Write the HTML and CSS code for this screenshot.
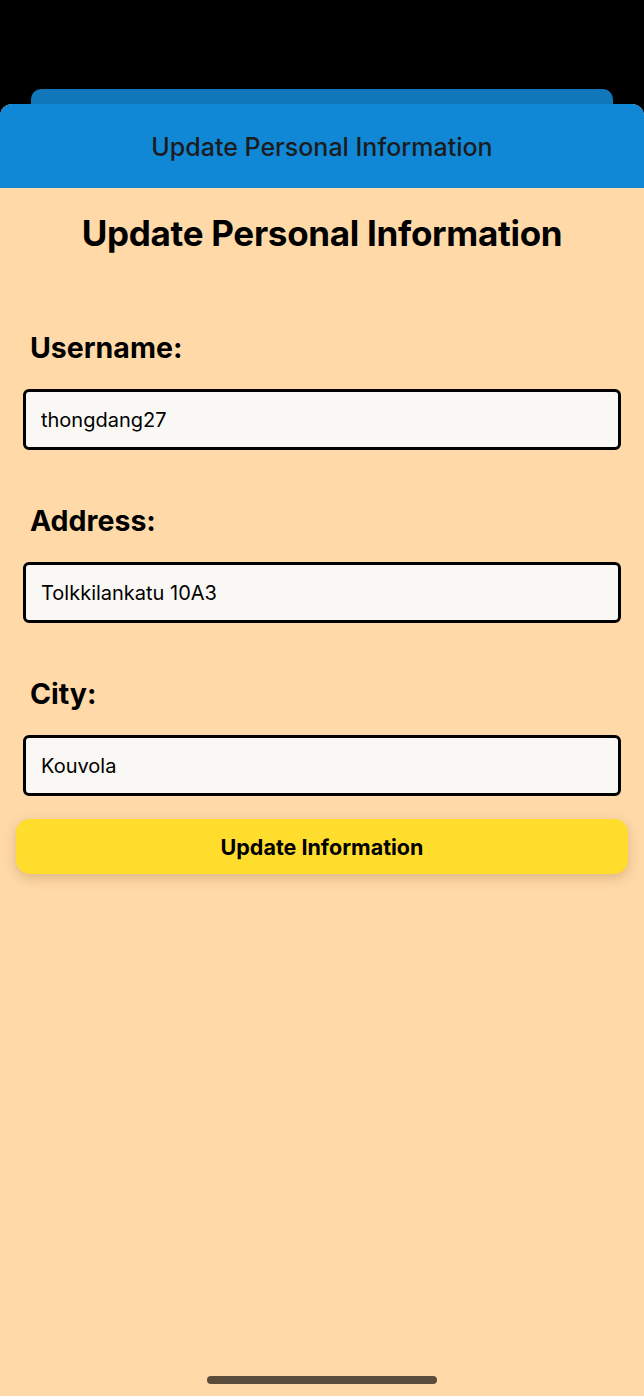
FILE: index.html
```html
<!DOCTYPE html>
<html lang="en">
<head>
<meta charset="utf-8">
<title>Update Personal Information</title>
<link rel="stylesheet" href="styles.css">
</head>
<body>
<div class="screen">
  <div class="status"></div>
  <div class="back-card"></div>
  <div class="sheet">
    <header class="nav"><span class="nav-title">Update Personal Information</span></header>
    <main class="content">
      <h1 class="title">Update Personal Information</h1>
      <form class="form">
        <label class="label" for="username">Username:</label>
        <input class="field" id="username" type="text" value="thongdang27">
        <label class="label" for="address">Address:</label>
        <input class="field" id="address" type="text" value="Tolkkilankatu 10A3">
        <label class="label" for="city">City:</label>
        <input class="field" id="city" type="text" value="Kouvola">
        <button class="btn" type="button">Update Information</button>
      </form>
      <div class="home-indicator"></div>
    </main>
  </div>
</div>
</body>
</html>
```
FILE: styles.css
```css
* { box-sizing: border-box; }
html, body { margin: 0; padding: 0; }
body {
  background: #000;
  font-family: Inter, "Noto Sans", "Liberation Sans", sans-serif;
  color: #000;
}
.screen {
  width: 644px;
  height: 1396px;
  display: flex;
  flex-direction: column;
  overflow: hidden;
}
.status { height: 89px; flex: none; }
.back-card {
  height: 15px;
  flex: none;
  margin: 0 31px;
  background: #1077bb;
  border-radius: 10px 10px 0 0;
}
.sheet {
  flex: 1;
  display: flex;
  flex-direction: column;
  border-radius: 12px 12px 0 0;
  overflow: hidden;
  background: #ffd9a8;
}
.nav {
  height: 84px;
  flex: none;
  background: #1088d5;
  display: flex;
  align-items: center;
  justify-content: center;
  padding-top: 1px;
}
.nav-title {
  font-size: 25px;
  font-weight: 500;
  color: #1c1c1e;
}
.content {
  flex: 1;
  display: flex;
  flex-direction: column;
}
.title {
  margin: 24px 0 0;
  text-align: center;
  font-size: 35px;
  line-height: 42px;
  font-weight: 700;
  letter-spacing: -0.3px;
}
.form {
  display: flex;
  flex-direction: column;
  margin-top: 77px;
}
.label {
  display: block;
  margin: 0 0 24px 30px;
  font-size: 28.5px;
  line-height: 34px;
  font-weight: 700;
}
.field {
  display: block;
  margin: 0 23px 54px 23px;
  height: 61px;
  border: 3px solid #000;
  border-radius: 6px;
  background: #faf8f4;
  padding: 0 15px;
  font-family: Inter, "Noto Sans", "Liberation Sans", sans-serif;
  font-size: 20px;
  color: #000;
  outline: none;
}
.field:last-of-type { margin-bottom: 23px; }
.btn {
  margin: 0 16px;
  height: 55px;
  border: none;
  border-radius: 14px;
  background: #ffdd2c;
  box-shadow: 0 4px 12px rgba(120, 80, 20, 0.25);
  font-family: Inter, "Noto Sans", "Liberation Sans", sans-serif;
  font-size: 21.5px;
  font-weight: 700;
  color: #000;
}
.home-indicator {
  margin: auto auto 12px;
  width: 230px;
  height: 8px;
  border-radius: 4px;
  background: #5a4c3a;
}
```
